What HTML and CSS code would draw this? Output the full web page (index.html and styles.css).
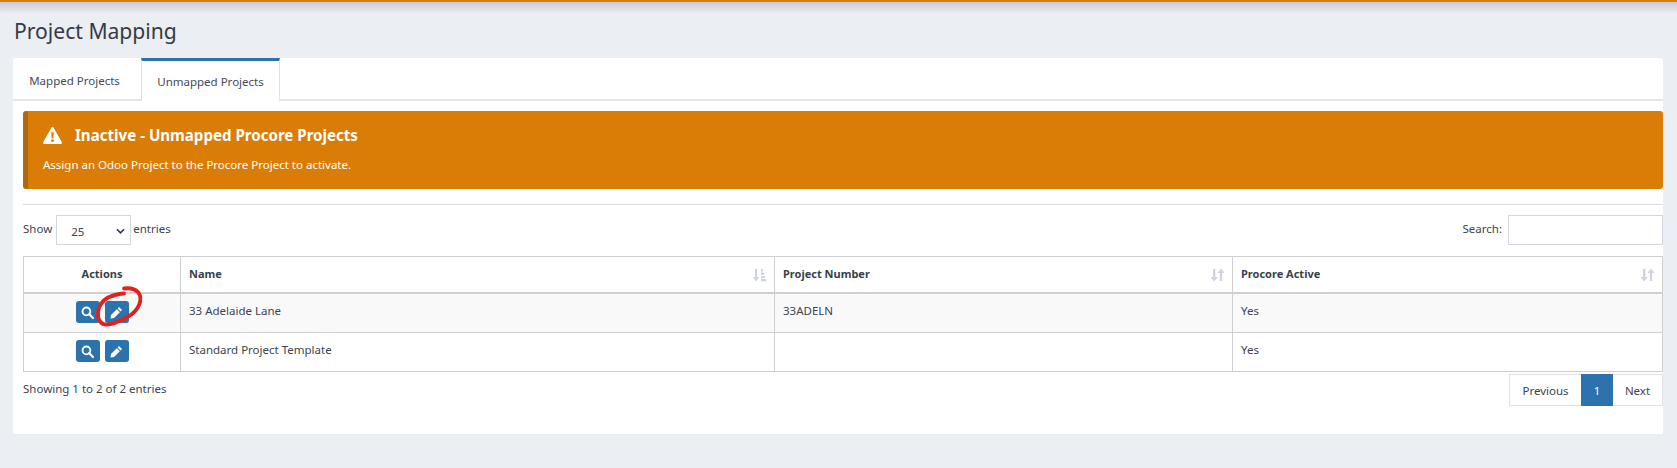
FILE: index.html
```html
<!DOCTYPE html>
<html lang="en">
<head>
<meta charset="utf-8">
<title>Project Mapping</title>
<link rel="stylesheet" href="styles.css">
</head>
<body>
<div class="topbar"></div>
<main class="page">
  <h1 class="title">Project Mapping</h1>
  <section class="card">
    <nav class="tabs">
      <a class="tab">Mapped Projects</a>
      <a class="tab tab-active">Unmapped Projects</a>
    </nav>
    <div class="tab-body">
      <div class="alert">
        <h2 class="alert-title">
          <svg class="alert-icon" viewBox="0 0 20 18"><path fill="#fff" fill-rule="evenodd" d="M10 0c.5 0 1 .3 1.200.7l8.600 15.300c.5.900-.1 2-1.200 2H1.400C.3 18-.3 16.900.2 16L8.800.7C9 .3 9.500 0 10 0zM8.700 5.500l.3 6.500h2l.3-6.500zM10 13a1.500 1.500 0 1 0 0 3 1.500 1.500 0 0 0 0-3z"/></svg>
          Inactive - Unmapped Procore Projects
        </h2>
        <p class="alert-text">Assign an Odoo Project to the Procore Project to activate.</p>
      </div>
      <hr class="rule">
      <div class="controls">
        <label class="length">Show
          <span class="select"><span>25</span>
            <svg class="chev" viewBox="0 0 10 6"><path d="M1 1l4 4 4-4" fill="none" stroke="#3f3350" stroke-width="1.800"/></svg>
          </span>
          entries</label>
        <label class="search">Search: <span class="search-input"></span></label>
      </div>
      <div class="table">
        <div class="row head">
          <div class="cell c1 center">Actions</div>
          <div class="cell c2">Name
            <svg class="sort" viewBox="0 0 14 14"><path fill="#d0d4de" d="M3 1h2.200v8h2.300L4.100 13.500.7 9H3zM9 1h2v2.500H9zM9 4.500h3v2.500H9zM9 8h4v2.200H9zM9 11h5v2.200H9z"/></svg>
          </div>
          <div class="cell c3">Project Number
            <svg class="sort" viewBox="0 0 14 14"><path fill="#d0d4de" d="M3 1h2.400v8H8l-3.800 4.500L.5 9H3zM9.800 13V5H7.500L11 .5 14.500 5h-2.400v8z"/></svg>
          </div>
          <div class="cell c4">Procore Active
            <svg class="sort" viewBox="0 0 14 14"><path fill="#d0d4de" d="M3 1h2.400v8H8l-3.800 4.500L.5 9H3zM9.800 13V5H7.500L11 .5 14.500 5h-2.400v8z"/></svg>
          </div>
        </div>
        <div class="row odd">
          <div class="cell c1 center actions">
            <span class="btn"><svg viewBox="0 0 12 12"><circle cx="5" cy="5" r="3.600" fill="none" stroke="#fff" stroke-width="1.700"/><path d="M7.700 7.700l3.300 3.300" stroke="#fff" stroke-width="2" stroke-linecap="round"/></svg></span>
            <span class="btn"><svg viewBox="0 0 12 12"><path fill="#fff" d="M8.300.9l2.800 2.800-1.300 1.300L7 2.200zM6.300 2.900l2.800 2.800-5.400 5.400L.5 11.500l.4-3.200z"/></svg></span>
          </div>
          <div class="cell c2">33 Adelaide Lane</div>
          <div class="cell c3">33ADELN</div>
          <div class="cell c4">Yes</div>
        </div>
        <div class="row">
          <div class="cell c1 center actions">
            <span class="btn"><svg viewBox="0 0 12 12"><circle cx="5" cy="5" r="3.600" fill="none" stroke="#fff" stroke-width="1.700"/><path d="M7.700 7.700l3.300 3.300" stroke="#fff" stroke-width="2" stroke-linecap="round"/></svg></span>
            <span class="btn"><svg viewBox="0 0 12 12"><path fill="#fff" d="M8.300.9l2.800 2.800-1.300 1.300L7 2.200zM6.300 2.900l2.800 2.800-5.400 5.400L.5 11.500l.4-3.200z"/></svg></span>
          </div>
          <div class="cell c2">Standard Project Template</div>
          <div class="cell c3"></div>
          <div class="cell c4">Yes</div>
        </div>
      </div>
      <div class="footer">
        <div class="info">Showing 1 to 2 of 2 entries</div>
        <div class="pager">
          <span class="page-link prev">Previous</span>
          <span class="page-link current">1</span>
          <span class="page-link next">Next</span>
        </div>
      </div>
    </div>
  </section>
</main>
<svg class="scribble" viewBox="0 0 50 44"><path d="M29 3C36 2 43 4 45 10 47 18 41 27 33 31 26 35 17 40 10 39 4 38 2 31 3 26 4 20 8 15 13 12 18 10 24 8 29 8" fill="none" stroke="#e2211c" stroke-width="3.800" stroke-linecap="round" stroke-linejoin="round"/></svg>
</body>
</html>
```

FILE: styles.css
```css
* { box-sizing: border-box; }
html, body { margin: 0; height: 100%; overflow: hidden; }
body {
  background: #ebeef3;
  font-family: "Noto Sans", "Open Sans", sans-serif;
  font-size: 11.5px;
  color: #3d4450;
  position: relative;
}
.topbar {
  height: 14px;
  border-top: 2px solid #d97d06;
  background: linear-gradient(#c9ccd2, #ebeef3);
}
.page { padding: 0 14px 0 13px; }
.title {
  margin: 0;
  height: 44px;
  padding: 3px 0 0 1px;
  font-size: 21.100px;
  line-height: 28px;
  font-weight: 400;
  color: #343a46;
}
.card {
  background: #fff;
  height: 376px;
  border-radius: 2px;
}
.tabs {
  display: flex;
  height: 43px;
  border-bottom: 2px solid #e2e5ec;
}
.tab {
  width: 128px;
  display: flex;
  align-items: center;
  justify-content: center;
  padding: 3px 5px 0 0;
  color: #444a58;
}
.tab-active {
  width: 139px;
  background: #fff;
  height: 43px;
  padding: 0;
  border-top: 3px solid #2c72ac;
  border-left: 1px solid #dee1e8;
  border-right: 1px solid #dee1e8;
}
.tab-body { padding: 10px 0 0 10px; }
.alert {
  height: 78px;
  background: #d97d06;
  border-left: 5px solid #b2690d;
  border-radius: 3px;
  padding: 13px 0 0 15px;
  color: #fff;
}
.alert-title {
  margin: 0;
  display: flex;
  align-items: center;
  gap: 13px;
  font-size: 15.100px;
  line-height: 22px;
  font-weight: 700;
}
.alert-icon { width: 19px; height: 17px; }
.alert-text { margin: 11px 0 0; line-height: 16px; font-size: 11.500px; }
.rule {
  margin: 15px 0 10px;
  border: 0;
  border-top: 1px solid #d8dbe2;
}
.controls {
  display: flex;
  justify-content: space-between;
  height: 30px;
  margin-bottom: 11px;
}
.length, .search { display: flex; align-items: flex-start; gap: 4px; line-height: 27px; }
.select {
  width: 75px;
  height: 30px;
  margin-right: -2px;
  border: 1px solid #d3d6de;
  display: flex;
  align-items: center;
  justify-content: space-between;
  padding: 2px 5px 0 14px;
}
.chev { width: 9px; height: 6px; }
.search-input {
  width: 155px;
  height: 30px;
  margin-left: 2px;
  border: 1px solid #d3d6de;
}
.table { border: 1px solid #cfcfd1; }
.row { display: flex; height: 39px; border-top: 1px solid #cfcfd1; }
.row.head { height: 37px; border-top: 0; border-bottom: 2px solid #cfcfd1; }
.row.head + .row { border-top: 0; height: 38px; }
.row.odd { background: #f9f9f9; }
.cell {
  position: relative;
  display: flex;
  align-items: center;
  padding: 0 0 5px 8px;
  border-right: 1px solid #cfcfd1;
}
.head .cell { font-weight: 700; font-size: 11px; color: #3a3f4b; padding-bottom: 3px; }
.c1 { width: 157px; }
.c2 { width: 594px; }
.c3 { width: 458px; }
.c4 { flex: 1; border-right: 0; }
.center { justify-content: center; padding-left: 0; }
.actions { gap: 5px; padding-bottom: 2px; }
.btn {
  width: 24px;
  height: 22px;
  background: #2c72ac;
  border-radius: 3px;
  display: flex;
  align-items: center;
  justify-content: center;
}
.btn svg { width: 13px; height: 13px; }
.sort {
  position: absolute;
  right: 8px;
  top: 11px;
  width: 14px;
  height: 14px;
}
.footer {
  display: flex;
  justify-content: space-between;
  align-items: flex-start;
  padding-top: 2px;
}
.info { padding-top: 7px; line-height: 16px; }
.pager {
  display: flex;
  height: 32px;
  border: 1px solid #dfe2e8;
}
.page-link {
  display: flex;
  align-items: center;
  justify-content: center;
}
.prev { width: 71px; }
.current { width: 32px; background: #2c72ac; color: #fff; margin: -1px 0; }
.next { width: 49px; }
.scribble {
  position: absolute;
  left: 95px;
  top: 285px;
  width: 50px;
  height: 45px;
}
```
